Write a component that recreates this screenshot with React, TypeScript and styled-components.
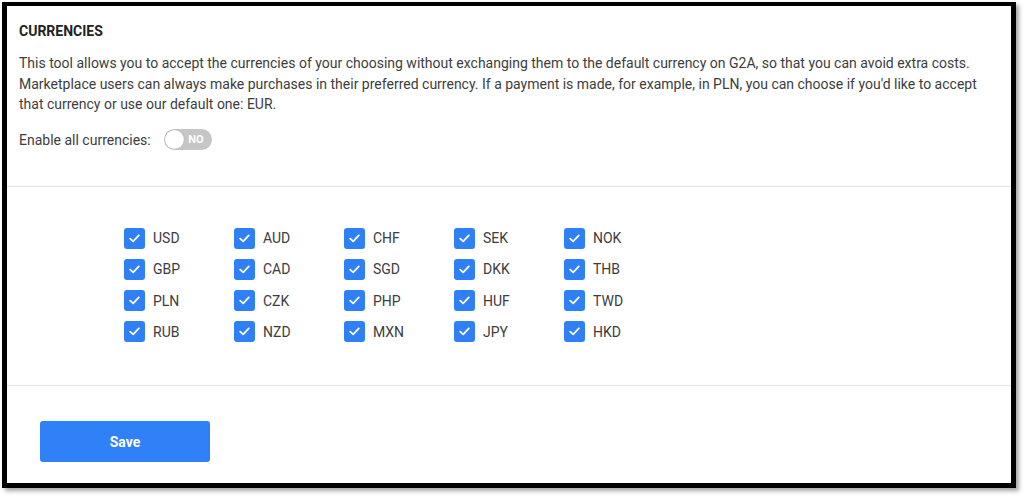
import React from "react";
import styled, { createGlobalStyle } from "styled-components";

const Global = createGlobalStyle`
  html, body { margin: 0; padding: 0; background: #ffffff; }
  body { font-family: Roboto, "Liberation Sans", Arial, sans-serif; }
  * { box-sizing: border-box; }
`;

const Page = styled.div`
  padding: 2px;
  width: 1025px;
  height: 497px;
`;

const Frame = styled.div`
  width: 1014px;
  height: 486px;
  border: 5px solid #000;
  border-top-width: 4px;
  background: #fff;
  box-shadow: 3px 3px 4px rgba(0, 0, 0, 0.35);
  display: flex;
  flex-direction: column;
`;

const Section = styled.section<{ $pad: string; $divider?: boolean }>`
  padding: ${(p) => p.$pad};
  border-bottom: ${(p) => (p.$divider ? "1px solid #e3e3e3" : "none")};
`;

const Title = styled.h2`
  margin: 0;
  font-size: 14px;
  line-height: 20px;
  font-weight: 700;
  color: #222;
`;

const Paragraph = styled.p`
  margin: 12px 0 0;
  font-size: 14px;
  line-height: 20.5px;
  color: #3d3d3d;
  max-width: 985px;
`;

const EnableRow = styled.div`
  margin-top: 14px;
  display: flex;
  align-items: center;
  gap: 13px;
  font-size: 14px;
  color: #3d3d3d;
  height: 22px;
`;

const Toggle = styled.div`
  position: relative;
  width: 48px;
  height: 21px;
  border-radius: 11px;
  background: #c6c6c6;
  display: flex;
  align-items: center;
  justify-content: flex-end;
  padding-right: 8px;
  color: #fff;
  font-size: 11px;
  font-weight: 700;
`;

const Knob = styled.span`
  position: absolute;
  left: 1px;
  top: 1px;
  width: 19px;
  height: 19px;
  border-radius: 50%;
  background: #fff;
  box-shadow: 0 0 1px rgba(0, 0, 0, 0.3);
`;

const Grid = styled.div`
  display: grid;
  grid-template-columns: repeat(5, 110px);
  row-gap: 10.3px;
`;

const Item = styled.label`
  display: flex;
  align-items: center;
  gap: 8px;
  height: 21px;
  font-size: 14px;
  color: #3d3d3d;
`;

const Box = styled.span`
  width: 21px;
  height: 21px;
  border-radius: 3px;
  background: #2f80f6;
  display: flex;
  align-items: center;
  justify-content: center;
`;

const SaveButton = styled.button`
  width: 170px;
  height: 41px;
  border: none;
  border-radius: 3px;
  background: #3081f7;
  color: #fff;
  font-family: Roboto, "Liberation Sans", Arial, sans-serif;
  font-size: 14px;
  font-weight: 700;
  cursor: pointer;
`;

const rows = [
  ["USD", "AUD", "CHF", "SEK", "NOK"],
  ["GBP", "CAD", "SGD", "DKK", "THB"],
  ["PLN", "CZK", "PHP", "HUF", "TWD"],
  ["RUB", "NZD", "MXN", "JPY", "HKD"],
];

const Check = () => (
  <svg width="11" height="9" viewBox="0 0 11 9" fill="none">
    <path d="M1.2 4.6 L4.2 7.4 L9.8 1.4" stroke="#fff" strokeWidth="1.8" strokeLinecap="round" strokeLinejoin="round" />
  </svg>
);

export default function App() {
  return (
    <Page>
      <Global />
      <Frame>
        <Section $pad="15px 12px 35px" $divider>
          <Title>CURRENCIES</Title>
          <Paragraph>
            This tool allows you to accept the currencies of your choosing without exchanging them to the default currency on G2A, so that you can avoid extra costs. Marketplace users can always make purchases in their preferred currency. If a payment is made, for example, in PLN, you can choose if you'd like to accept that currency or use our default one: EUR.
          </Paragraph>
          <EnableRow>
            Enable all currencies:
            <Toggle>
              <Knob />
              NO
            </Toggle>
          </EnableRow>
        </Section>
        <Section $pad="41px 0 43px 117px" $divider>
          <Grid>
            {rows.flat().map((c) => (
              <Item key={c}>
                <Box>
                  <Check />
                </Box>
                {c}
              </Item>
            ))}
          </Grid>
        </Section>
        <Section $pad="35px 0 0 33px">
          <SaveButton>Save</SaveButton>
        </Section>
      </Frame>
    </Page>
  );
}
